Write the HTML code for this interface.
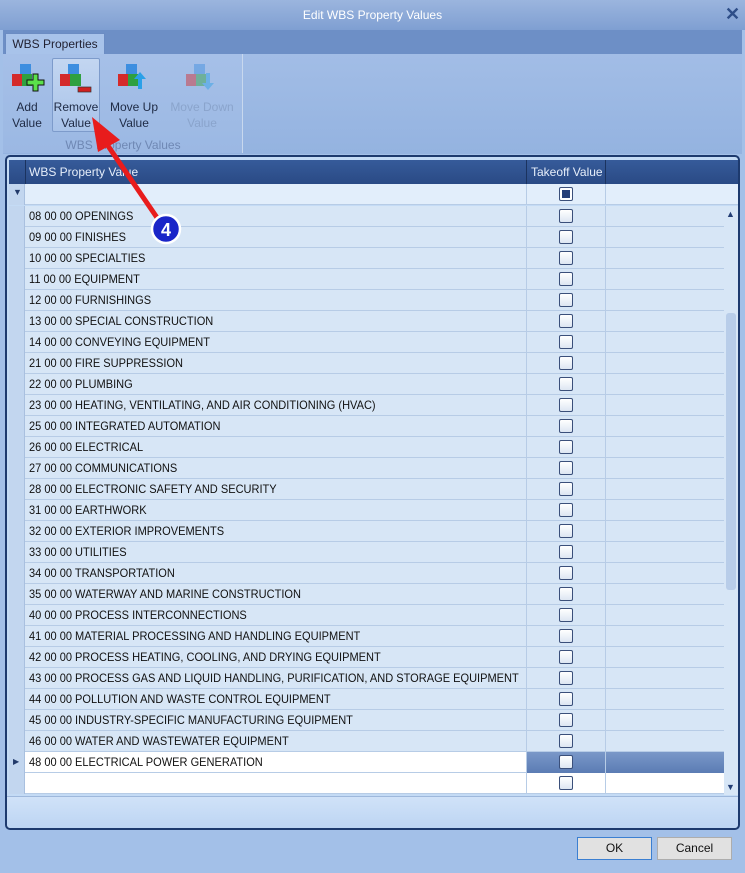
<!DOCTYPE html>
<html><head><style>
*{box-sizing:border-box;margin:0;padding:0}
body{width:745px;height:873px;overflow:hidden;background:#a3c0e8;font-family:"Liberation Sans",sans-serif;font-size:11px;position:relative;color:#111}
.abs{position:absolute}
.title{left:0;top:0;width:745px;height:30px;background:linear-gradient(#9bb5de,#7f9fd2);text-align:center;line-height:30px;color:#fff;font-size:12px}
.rib{left:3px;top:30px;width:739px;height:124px;background:#6d8fc6}
.tab{left:5px;top:33px;width:100px;height:21px;background:#a8c3ea;border:1px solid #6b8cc3;border-bottom:none;line-height:20px;text-align:center;color:#223;font-size:12px}
.rbody{left:3px;top:54px;width:739px;height:100px;background:linear-gradient(#a2bde6,#94b3e0)}
.grp{left:3px;top:54px;width:240px;height:99px;background:linear-gradient(#a6c0e8,#9bb8e3);border-right:1px solid #c8d8ee}
.btn{top:58px;text-align:center;line-height:16px;color:#1e2a44;font-size:12px}
.panel{left:5px;top:155px;width:735px;height:675px;background:#c4dbf5;border:2px solid #1d3a6e;border-radius:5px}
.hdr{left:9px;top:160px;width:729px;height:24px;background:linear-gradient(#365b9a,#2a4a85);color:#e6eefa;font-size:12px}
.row{position:absolute;left:9px;width:715px;height:21px;background:#d7e6f6;border-bottom:1px solid #b7cce6}
.row .ind{position:absolute;left:0;top:0;width:16px;height:21px;background:#c2d6ef;border-right:1px solid #a9c0df}
.row .t{position:absolute;left:20px;top:3px;white-space:nowrap;font-size:12px;transform:scaleX(0.92);transform-origin:0 0}
.row .c1{position:absolute;left:517px;top:0;width:1px;height:21px;background:#b7cce6}
.row .c2{position:absolute;left:596px;top:0;width:1px;height:21px;background:#b7cce6}
.cb{position:absolute;left:550px;top:3px;width:14px;height:14px;border:1px solid #3a4f7a;border-radius:2px;background:linear-gradient(#fff,#dde6f2)}
.ok{top:837px;height:23px;background:#e1e1e1;border:1px solid #adadad;text-align:center;line-height:21px;font-size:12px}
</style></head><body>
<div class="abs title">Edit WBS Property Values</div>
<div class="abs" style="left:725px;top:4px;color:#2e4e88;font-size:18px;font-weight:bold">✕</div>
<div class="abs rib"></div>
<div class="abs rbody"></div>
<div class="abs grp"></div>
<div class="abs tab">WBS Properties</div>
<div class="abs" style="left:52px;top:58px;width:48px;height:74px;border:1px solid #7d9bcb;border-radius:2px;background:linear-gradient(#c3d6f1,#a9c3e9)"></div>
<svg class="abs" style="left:0;top:60px" width="240" height="36">
<g><rect x="20" y="4" width="11" height="11" fill="#3d8ee0"/><rect x="12" y="14" width="11" height="12" fill="#d42a2a"/><rect x="22" y="14" width="10" height="12" fill="#2fa040"/><path d="M33 14h5v6h6v5h-6v6h-5v-6h-6v-5h6z" fill="#5be04a" stroke="#111" stroke-width="1"/></g>
<g><rect x="68" y="4" width="11" height="11" fill="#3d8ee0"/><rect x="60" y="14" width="11" height="12" fill="#d42a2a"/><rect x="70" y="14" width="11" height="12" fill="#2fa040"/><rect x="78" y="27" width="13" height="5" fill="#d02020" stroke="#333" stroke-width=".7"/></g>
<g><rect x="126" y="4" width="11" height="11" fill="#3d8ee0"/><rect x="118" y="14" width="11" height="12" fill="#d42a2a"/><rect x="128" y="14" width="10" height="12" fill="#2fa040"/><path d="M140 12l6 7h-4v10h-4v-10h-4z" fill="#2aa0e8"/></g>
<g opacity=".45"><rect x="194" y="4" width="11" height="11" fill="#3d8ee0"/><rect x="186" y="14" width="11" height="12" fill="#d42a2a"/><rect x="196" y="14" width="10" height="12" fill="#2fa040"/><path d="M208 30l6-7h-4v-10h-4v10h-4z" fill="#2aa0e8"/></g>
</svg>
<div class="abs btn" style="left:8px;top:99px;width:38px">Add<br>Value</div>
<div class="abs btn" style="left:52px;top:99px;width:48px">Remove<br>Value</div>
<div class="abs btn" style="left:104px;top:99px;width:60px">Move Up<br>Value</div>
<div class="abs btn" style="left:166px;top:99px;width:72px;color:#8aa4cc">Move Down<br>Value</div>
<div class="abs" style="left:3px;top:138px;width:240px;text-align:center;color:#6f88b4;font-size:12px">WBS Property Values</div>
<div class="abs panel"></div>
<div class="abs hdr">
<div class="abs" style="left:16px;top:0;width:1px;height:24px;background:#1b335f"></div>
<div class="abs" style="left:20px;top:5px">WBS Property Value</div>
<div class="abs" style="left:517px;top:0;width:1px;height:24px;background:#1b335f"></div>
<div class="abs" style="left:522px;top:5px">Takeoff Value</div>
<div class="abs" style="left:596px;top:0;width:1px;height:24px;background:#1b335f"></div>
</div>
<div class="row" style="top:184px;width:729px;background:#e2eefb"><div class="ind"><span style="position:absolute;left:4px;top:3px;font-size:9px;color:#223a6a">▼</span></div><div class="c1"></div><div class="c2"></div><div class="cb" style="background:#fff"><div style="margin:2px;width:8px;height:8px;background:#263f78"></div></div></div>
<div id="rows"></div>
<div class="abs" style="left:724px;top:206px;width:14px;height:589px;background:#d7e6f6"></div>
<div class="abs" style="left:726px;top:313px;width:10px;height:277px;background:#b8cde9;border-radius:3px"></div>
<div class="abs" style="left:726px;top:209px;font-size:9px;color:#233e75">▲</div>
<div class="abs" style="left:726px;top:782px;font-size:9px;color:#233e75">▼</div>
<div class="abs" style="left:7px;top:796px;width:731px;height:32px;background:linear-gradient(#d0e2f8,#bdd5f3);border-top:1px solid #9eb8dc;border-radius:0 0 4px 4px"></div>
<div class="abs ok" style="left:577px;width:75px;border-color:#3b7fd1">OK</div>
<div class="abs ok" style="left:657px;width:75px">Cancel</div>
<script>
var items=["08 00 00 OPENINGS","09 00 00 FINISHES","10 00 00 SPECIALTIES","11 00 00 EQUIPMENT","12 00 00 FURNISHINGS","13 00 00 SPECIAL CONSTRUCTION","14 00 00 CONVEYING EQUIPMENT","21 00 00 FIRE SUPPRESSION","22 00 00 PLUMBING","23 00 00 HEATING, VENTILATING, AND AIR CONDITIONING (HVAC)","25 00 00 INTEGRATED AUTOMATION","26 00 00 ELECTRICAL","27 00 00 COMMUNICATIONS","28 00 00 ELECTRONIC SAFETY AND SECURITY","31 00 00 EARTHWORK","32 00 00 EXTERIOR IMPROVEMENTS","33 00 00 UTILITIES","34 00 00 TRANSPORTATION","35 00 00 WATERWAY AND MARINE CONSTRUCTION","40 00 00 PROCESS INTERCONNECTIONS","41 00 00 MATERIAL PROCESSING AND HANDLING EQUIPMENT","42 00 00 PROCESS HEATING, COOLING, AND DRYING EQUIPMENT","43 00 00 PROCESS GAS AND LIQUID HANDLING, PURIFICATION, AND STORAGE EQUIPMENT","44 00 00 POLLUTION AND WASTE CONTROL EQUIPMENT","45 00 00 INDUSTRY-SPECIFIC MANUFACTURING EQUIPMENT","46 00 00 WATER AND WASTEWATER EQUIPMENT","48 00 00 ELECTRICAL POWER GENERATION",""];
var h="";items.forEach(function(s,i){var top=206+i*21;var sel=i==26,last=i==27;
h+='<div class="row" style="top:'+top+'px;'+(sel||last?'background:#fff;':'')+'"><div class="ind">'+(sel?'<span style="position:absolute;left:4px;top:5px;font-size:8px;color:#223a6a">▶</span>':'')+'</div><div class="t">'+s+'</div>'+(sel?'<div style="position:absolute;left:517px;top:0;width:198px;height:21px;background:linear-gradient(#7a98c8,#5b7cb4)"></div>':'')+'<div class="c1"></div><div class="c2"></div><div class="cb"></div></div>';});
document.getElementById("rows").innerHTML=h;
</script>
<svg class="abs" style="left:0;top:0" width="745" height="873">
<line x1="160" y1="222" x2="104" y2="140" stroke="#e81c1c" stroke-width="5" stroke-linecap="round"/>
<path d="M92 117 L120 140 L98 152 Z" fill="#e81c1c"/>
<circle cx="166" cy="229" r="14" fill="#1a25c8" stroke="#fff" stroke-width="2.5"/>
<text x="166" y="236" text-anchor="middle" fill="#fff" font-family="Liberation Sans" font-weight="bold" font-size="18">4</text>
</svg>
</body></html>
